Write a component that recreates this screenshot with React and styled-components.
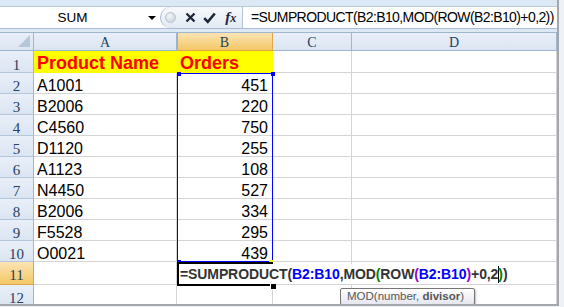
import React from "react";
import styled, { createGlobalStyle } from "styled-components";

const products = [
  ["A1001", 451],
  ["B2006", 220],
  ["C4560", 750],
  ["D1120", 255],
  ["A1123", 108],
  ["N4450", 527],
  ["B2006", 334],
  ["F5528", 295],
  ["O0021", 439],
];

const columns = ["A", "B", "C", "D"];

function App() {
  return (
    <Page>
      <GlobalStyle />
      <Frame>
        <TopBand />
        <FormulaBar>
          <NameBox>SUM</NameBox>
          <DropArrow>
            <Triangle />
          </DropArrow>
          <ButtonStrip>
            <Slot>
              <Grip />
            </Slot>
            <Slot>
              <svg width="11" height="11" viewBox="0 0 11 11">
                <path d="M1.5 1.5 L9.5 9.5 M9.5 1.5 L1.5 9.5" stroke="#1c2638" strokeWidth="2.3" />
              </svg>
            </Slot>
            <Slot>
              <svg width="13" height="12" viewBox="0 0 13 12">
                <path d="M1.2 6.2 L4.8 9.8 L11.8 1.5" stroke="#1c2638" strokeWidth="2.6" fill="none" />
              </svg>
            </Slot>
            <Slot $wide>
              <Fx>
                f<FxSub>x</FxSub>
              </Fx>
            </Slot>
          </ButtonStrip>
          <FormulaInput>=SUMPRODUCT(B2:B10,MOD(ROW(B2:B10)+0,2))</FormulaInput>
        </FormulaBar>
        <Gap />
        <Grid>
          <Corner>
            <CornerMark />
          </Corner>
          {columns.map((c) => (
            <ColHead key={c} $active={c === "B"}>
              {c}
            </ColHead>
          ))}

          <RowHead $tall>1</RowHead>
          <Cell $fill="#ffff00" $bold $color="#ff0000" $pad={3}>
            Product Name
          </Cell>
          <Cell $fill="#ffff00" $bold $color="#ff0000" $pad={3}>
            Orders
          </Cell>
          <Cell />
          <Cell />

          {products.map(([name, orders], i) => (
            <React.Fragment key={i}>
              <RowHead>{i + 2}</RowHead>
              <Cell>{name}</Cell>
              <Cell $right>{orders}</Cell>
              <Cell />
              <Cell />
            </React.Fragment>
          ))}

          <RowHead $active>11</RowHead>
          <Cell />
          <Cell />
          <Cell />
          <Cell />

          <RowHead>12</RowHead>
          <Cell />
          <Cell />
          <Cell />
          <Cell />

          <Selection />
          <Handle $x={177} $y={39} />
          <Handle $x={271} $y={39} />
          <Handle $x={177} $y={227} />
          <Handle $x={269} $y={227} $color="#ffff00" />
          <ActiveCell />
          <FillHandle />
          <Editor>
            <Dark>=SUMPRODUCT(</Dark>
            <Ref>B2:B10</Ref>
            <Dark>,MOD</Dark>
            <Paren $c="#008000">(</Paren>
            <Dark>ROW</Dark>
            <Paren $c="#9900cc">(</Paren>
            <Ref>B2:B10</Ref>
            <Paren $c="#9900cc">)</Paren>
            <Dark>+0,2</Dark>
            <Caret />
            <Paren $c="#008000">)</Paren>
            <Dark>)</Dark>
          </Editor>
          <Tooltip>
            MOD(number, <b>divisor</b>)
          </Tooltip>
        </Grid>
      </Frame>
    </Page>
  );
}

export default App;

const GlobalStyle = createGlobalStyle`
  body {
    margin: 0;
    background: #eef1f5;
    font-family: "Liberation Sans", Arial, sans-serif;
  }
`;

const Page = styled.div`
  width: 564px;
  height: 307px;
  overflow: hidden;
  background: #eef1f5;
`;

const Frame = styled.div`
  width: 559px;
  height: 306px;
  box-sizing: border-box;
  border-right: 2px solid #a4a8ae;
  border-bottom: 2px solid #a4a8ae;
  background: #ffffff;
  overflow: hidden;
  display: flex;
  flex-direction: column;
`;

const TopBand = styled.div`
  height: 7px;
  flex: none;
  background: #dde8f5;
  border-bottom: 1px solid #b7c8dd;
  box-sizing: border-box;
`;

const FormulaBar = styled.div`
  height: 22px;
  flex: none;
  display: flex;
  background: #ffffff;
  border-bottom: 1px solid #a9bcd4;
  box-sizing: border-box;
`;

const NameBox = styled.div`
  width: 145px;
  font-size: 13.5px;
  line-height: 21px;
  text-align: center;
  color: #000;
`;

const DropArrow = styled.div`
  width: 15px;
  display: flex;
  align-items: center;
  justify-content: center;
`;

const Triangle = styled.div`
  width: 0;
  height: 0;
  border-left: 4px solid transparent;
  border-right: 4px solid transparent;
  border-top: 4px solid #000;
  margin-left: -2px;
`;

const ButtonStrip = styled.div`
  width: 83px;
  display: flex;
  border-left: 1px solid #a9b9cd;
  border-radius: 11px 0 0 11px;
  background: linear-gradient(#f7f9fc, #e3eaf3);
  border-right: 1px solid #b3c3d6;
  box-sizing: border-box;
`;

const Slot = styled.div`
  width: ${(p) => (p.$wide ? "23px" : "20px")};
  display: flex;
  align-items: center;
  justify-content: center;
`;

const Grip = styled.div`
  width: 11px;
  height: 11px;
  border-radius: 50%;
  border: 1px solid #b8c2cf;
  background: radial-gradient(circle at 40% 35%, #f4f6f9, #c4ccd7);
  box-sizing: border-box;
`;

const Fx = styled.span`
  font-family: "Liberation Serif", serif;
  font-style: italic;
  font-weight: bold;
  font-size: 15px;
  color: #1c2638;
  line-height: 1;
`;

const FxSub = styled.span`
  font-size: 12px;
`;

const FormulaInput = styled.div`
  flex: 1;
  padding-left: 8px;
  font-size: 14px;
  letter-spacing: -0.6px;
  line-height: 21px;
  color: #000;
  white-space: nowrap;
  overflow: hidden;
`;

const Gap = styled.div`
  height: 4px;
  flex: none;
  background: #dde8f5;
`;

const Grid = styled.div`
  position: relative;
  display: grid;
  grid-template-columns: 34px 143px 96px 79px 205px;
  grid-template-rows: 18px 22px repeat(9, 21px) 23px 21px;
  border-top: 1px solid #9eb6ce;
  margin-top: -1px;
`;

const headBg = "linear-gradient(#e9eff8, #dbe5f2)";
const activeBg = "linear-gradient(#fbe3b4, #f4c866)";

const Corner = styled.div`
  position: relative;
  background: ${headBg};
  border-right: 1px solid #9eb6ce;
  border-bottom: 1px solid #9eb6ce;
`;

const CornerMark = styled.div`
  position: absolute;
  right: 3px;
  bottom: 3px;
  width: 0;
  height: 0;
  border-left: 12px solid transparent;
  border-bottom: 12px solid #b7c6d9;
`;

const ColHead = styled.div`
  box-sizing: border-box;
  background: ${(p) => (p.$active ? activeBg : headBg)};
  border-right: 1px solid ${(p) => (p.$active ? "#e0a44a" : "#9eb6ce")};
  border-bottom: 1px solid ${(p) => (p.$active ? "#e0a44a" : "#9eb6ce")};
  ${(p) => p.$active && "box-shadow: inset 1px 0 0 #e0a44a;"}
  font-family: "Liberation Serif", serif;
  font-size: 14px;
  line-height: 14px;
  padding-top: 3px;
  text-align: center;
  color: #27415f;
`;

const RowHead = styled.div`
  box-sizing: border-box;
  background: ${(p) => (p.$active ? activeBg : headBg)};
  border-right: 1px solid ${(p) => (p.$active ? "#e0a44a" : "#9eb6ce")};
  border-bottom: 1px solid ${(p) => (p.$active ? "#e0a44a" : "#b3c6dc")};
  font-family: "Liberation Serif", serif;
  font-size: 15px;
  line-height: 15px;
  padding-top: ${(p) => (p.$tall ? "7px" : "6px")};
  text-align: center;
  color: #27415f;
`;

const Cell = styled.div`
  box-sizing: border-box;
  background: ${(p) => p.$fill || "#ffffff"};
  border-right: 1px solid ${(p) => p.$fill || "#d4d4d4"};
  border-bottom: 1px solid ${(p) => p.$fill || "#d4d4d4"};
  font-size: ${(p) => (p.$bold ? "18px" : "16px")};
  font-weight: ${(p) => (p.$bold ? "bold" : "normal")};
  line-height: ${(p) => (p.$bold ? "18px" : "16px")};
  padding: ${(p) => (p.$pad != null ? p.$pad : 5)}px 4px 0 3px;
  text-align: ${(p) => (p.$right ? "right" : "left")};
  color: ${(p) => p.$color || "#000"};
  white-space: nowrap;
`;

const Selection = styled.div`
  position: absolute;
  left: 177px;
  top: 40px;
  width: 96px;
  height: 189px;
  box-sizing: border-box;
  border: 1px solid #0000ff;
  pointer-events: none;
`;

const Handle = styled.div`
  position: absolute;
  left: ${(p) => p.$x}px;
  top: ${(p) => p.$y}px;
  width: 4px;
  height: 4px;
  background: ${(p) => p.$color || "#0000ff"};
`;

const ActiveCell = styled.div`
  position: absolute;
  left: 177px;
  top: 229px;
  width: 96px;
  height: 24px;
  box-sizing: border-box;
  border: 2px solid #000;
  border-right: none;
`;

const FillHandle = styled.div`
  position: absolute;
  left: 270px;
  top: 250px;
  width: 5px;
  height: 5px;
  background: #000;
  border: 1px solid #fff;
  border-right: none;
  box-sizing: content-box;
`;

const Editor = styled.div`
  position: absolute;
  left: 179px;
  top: 231px;
  height: 20px;
  padding: 0 4px 0 1px;
  background: #ffffff;
  font-size: 14px;
  font-weight: bold;
  letter-spacing: -0.1px;
  line-height: 20px;
  white-space: nowrap;
`;

const Dark = styled.span`
  color: #333333;
`;

const Ref = styled.span`
  color: #0000ff;
`;

const Paren = styled.span`
  color: ${(p) => p.$c};
`;

const Caret = styled.span`
  display: inline-block;
  width: 1px;
  height: 17px;
  margin-right: -1px;
  background: #000;
  vertical-align: -4px;
`;

const Tooltip = styled.div`
  position: absolute;
  left: 340px;
  top: 255px;
  height: 17px;
  width: 135px;
  box-sizing: border-box;
  padding-left: 6px;
  border: 1px solid #767676;
  border-radius: 2px;
  background: linear-gradient(#ffffff, #e6e7ef);
  box-shadow: 1px 1px 2px rgba(0, 0, 0, 0.25);
  font-size: 11.5px;
  line-height: 15px;
  color: #575757;
  white-space: nowrap;
`;
